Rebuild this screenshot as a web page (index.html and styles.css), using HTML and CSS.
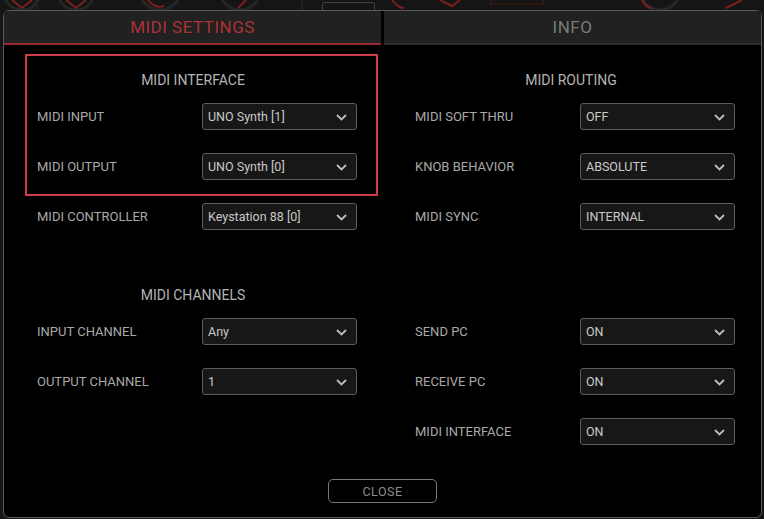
FILE: index.html
```html
<!DOCTYPE html>
<html lang="en">
<head>
    <meta charset="UTF-8">
    <meta name="viewport" content="width=device-width, initial-scale=1.0">
    <title>MIDI Settings</title>
    <link rel="stylesheet" href="styles.css">
</head>
<body>
    <!-- synth panel peeking out behind the dialog -->
    <div class="app-strip">
        <svg width="764" height="10" viewBox="0 0 764 10">
            <circle cx="22" cy="-8" r="18" fill="none" stroke="#262626" stroke-width="3"/>
            <path d="M12 0 L22 8 L32 0" fill="none" stroke="#7a1f1f" stroke-width="2"/>
            <line x1="37" y1="0" x2="37" y2="10" stroke="#2c2c2c"/>
            <circle cx="76" cy="-8" r="18" fill="none" stroke="#262626" stroke-width="3"/>
            <path d="M66 0 L76 8 L86 0" fill="none" stroke="#7a1f1f" stroke-width="2"/>
            <circle cx="160" cy="-10" r="20" fill="none" stroke="#262626" stroke-width="3"/>
            <path d="M148 0 Q156 9 164 6" fill="none" stroke="#7a1f1f" stroke-width="2"/>
            <circle cx="240" cy="-10" r="20" fill="none" stroke="#262626" stroke-width="3"/>
            <path d="M238 8 L246 0" fill="none" stroke="#7a1f1f" stroke-width="2"/>
            <line x1="302" y1="0" x2="302" y2="10" stroke="#2c2c2c"/>
            <rect x="322.5" y="2.5" width="52" height="10" rx="2" fill="none" stroke="#444"/>
            <path d="M392 0 Q398 8 404 8" fill="none" stroke="#7a1f1f" stroke-width="2"/>
            <path d="M440 0 L452 6 L460 0" fill="none" stroke="#7a1f1f" stroke-width="2"/>
            <rect x="490.5" y="-4" width="53" height="8" fill="none" stroke="#4a1515"/>
            <circle cx="660" cy="-10" r="20" fill="none" stroke="#262626" stroke-width="3"/>
            <path d="M642 0 Q646 8 652 8" fill="none" stroke="#7a1f1f" stroke-width="2"/>
            <path d="M726 8 L742 0" fill="none" stroke="#7a1f1f" stroke-width="2"/>
        </svg>
    </div>

    <div class="dialog">
        <div class="tabs">
            <div class="tab tab-active">MIDI SETTINGS</div>
            <div class="tab">INFO</div>
        </div>

        <div class="panels">
            <div class="column column-left">
                <h2 class="section-title">MIDI INTERFACE</h2>
                <div class="row">
                    <span class="label">MIDI INPUT</span>
                    <div class="select">UNO Synth [1]<svg class="chevron" viewBox="0 0 11 7"><polyline points="1,1 5.5,5.5 10,1"/></svg></div>
                </div>
                <div class="row">
                    <span class="label">MIDI OUTPUT</span>
                    <div class="select">UNO Synth [0]<svg class="chevron" viewBox="0 0 11 7"><polyline points="1,1 5.5,5.5 10,1"/></svg></div>
                </div>
                <div class="row">
                    <span class="label">MIDI CONTROLLER</span>
                    <div class="select">Keystation 88 [0]<svg class="chevron" viewBox="0 0 11 7"><polyline points="1,1 5.5,5.5 10,1"/></svg></div>
                </div>

                <h2 class="section-title section-gap">MIDI CHANNELS</h2>
                <div class="row">
                    <span class="label">INPUT CHANNEL</span>
                    <div class="select">Any<svg class="chevron" viewBox="0 0 11 7"><polyline points="1,1 5.5,5.5 10,1"/></svg></div>
                </div>
                <div class="row">
                    <span class="label">OUTPUT CHANNEL</span>
                    <div class="select">1<svg class="chevron" viewBox="0 0 11 7"><polyline points="1,1 5.5,5.5 10,1"/></svg></div>
                </div>
            </div>

            <div class="column column-right">
                <h2 class="section-title">MIDI ROUTING</h2>
                <div class="row">
                    <span class="label">MIDI SOFT THRU</span>
                    <div class="select">OFF<svg class="chevron" viewBox="0 0 11 7"><polyline points="1,1 5.5,5.5 10,1"/></svg></div>
                </div>
                <div class="row">
                    <span class="label">KNOB BEHAVIOR</span>
                    <div class="select">ABSOLUTE<svg class="chevron" viewBox="0 0 11 7"><polyline points="1,1 5.5,5.5 10,1"/></svg></div>
                </div>
                <div class="row">
                    <span class="label">MIDI SYNC</span>
                    <div class="select">INTERNAL<svg class="chevron" viewBox="0 0 11 7"><polyline points="1,1 5.5,5.5 10,1"/></svg></div>
                </div>

                <h2 class="section-title section-gap">&nbsp;</h2>
                <div class="row">
                    <span class="label">SEND PC</span>
                    <div class="select">ON<svg class="chevron" viewBox="0 0 11 7"><polyline points="1,1 5.5,5.5 10,1"/></svg></div>
                </div>
                <div class="row">
                    <span class="label">RECEIVE PC</span>
                    <div class="select">ON<svg class="chevron" viewBox="0 0 11 7"><polyline points="1,1 5.5,5.5 10,1"/></svg></div>
                </div>
                <div class="row">
                    <span class="label">MIDI INTERFACE</span>
                    <div class="select">ON<svg class="chevron" viewBox="0 0 11 7"><polyline points="1,1 5.5,5.5 10,1"/></svg></div>
                </div>
            </div>
        </div>

        <div class="footer">
            <button type="button" class="close-btn">CLOSE</button>
        </div>

        <!-- highlight drawn over the interface group -->
        <div class="highlight"></div>
    </div>
</body>
</html>
```

FILE: styles.css
```css
* {
    margin: 0;
    padding: 0;
    box-sizing: border-box;
}

body {
    background: #151515;
    font-family: Roboto, 'Liberation Sans', sans-serif;
    width: 764px;
    height: 519px;
    overflow: hidden;
}

.app-strip {
    height: 10px;
    overflow: hidden;
}

.app-strip svg {
    display: block;
}

.dialog {
    position: relative;
    margin-left: 3px;
    width: 759px;
    height: 508px;
    background: #000;
    border: 1px solid #5a5a5a;
    border-radius: 6px;
    display: flex;
    flex-direction: column;
    overflow: hidden;
}

.tabs {
    display: flex;
    gap: 3px;
    height: 34px;
    background: #000;
}

.tab {
    flex: 1;
    display: flex;
    align-items: center;
    justify-content: center;
    background: #212121;
    color: #7a7a7a;
    font-size: 17px;
    letter-spacing: 0.5px;
    border-bottom: 2px solid #2e2e2e;
}

.tab-active {
    color: #ac3236;
    border-bottom-color: #982b2f;
}

.panels {
    display: grid;
    grid-template-columns: 378px 1fr;
    gap: 2px;
}

.column {
    padding-top: 25px;
}

.column-left .row {
    margin-left: 33px;
}

.column-right .row {
    margin-left: 31px;
}

.column-right .section-title {
    padding-right: 3px;
}

.section-title {
    height: 20px;
    line-height: 20px;
    margin-bottom: 13px;
    text-align: center;
    font-size: 14px;
    font-weight: 400;
    color: #b4b4b4;
}

.section-gap {
    margin-top: 55px;
}

.row {
    display: grid;
    grid-template-columns: 165px 155px;
    align-items: center;
    height: 27px;
    margin-bottom: 23px;
}

.label {
    font-size: 13px;
    color: #a9a9a9;
}

.select {
    position: relative;
    height: 27px;
    line-height: 25px;
    padding-left: 5px;
    background: #171717;
    border: 1px solid #5c5c5c;
    border-radius: 3px;
    font-size: 12.5px;
    color: #c9c9c9;
}

.chevron {
    position: absolute;
    right: 9px;
    top: 10px;
    width: 11px;
    height: 7px;
    fill: none;
    stroke: #bdbdbd;
    stroke-width: 1.8;
}

.footer {
    margin-top: auto;
    padding-bottom: 14px;
    display: flex;
    justify-content: center;
}

.close-btn {
    width: 109px;
    height: 24px;
    background: #000;
    border: 1px solid #7a7a7a;
    border-radius: 5px;
    color: #8c8c8c;
    font-family: Roboto, 'Liberation Sans', sans-serif;
    font-size: 12.5px;
    letter-spacing: 0.5px;
}

.highlight {
    position: absolute;
    left: 21px;
    top: 43px;
    width: 353px;
    height: 142px;
    border: 2px solid #cf3d4a;
    pointer-events: none;
}
```
